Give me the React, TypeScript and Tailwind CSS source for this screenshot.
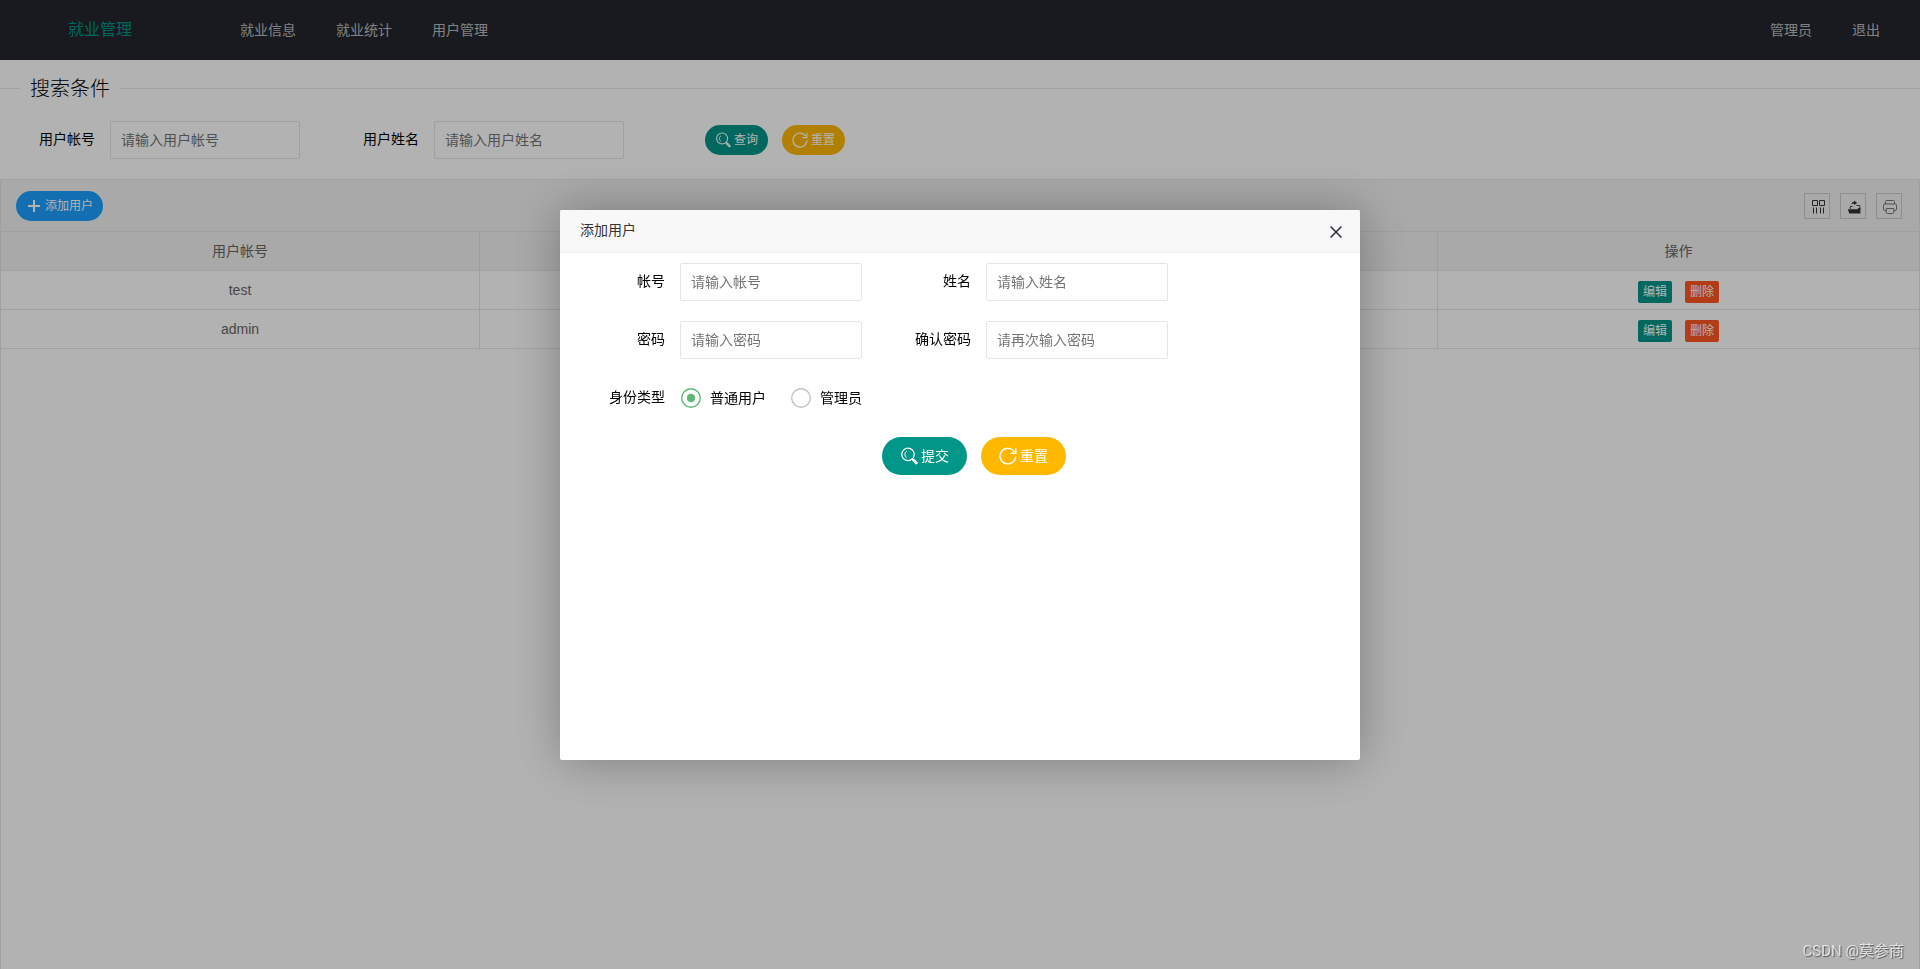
import React, { useState } from 'react';
import clsx from 'clsx';

const navItems = ['就业信息', '就业统计', '用户管理'];

const users = [
  { account: 'test', name: '测试', role: '普通用户' },
  { account: 'admin', name: '管理员', role: '管理员' },
];

function SearchIcon({ className }: { className?: string }) {
  return (
    <svg viewBox="0 0 18 18" fill="none" stroke="currentColor" className={className}>
      <circle cx="8" cy="7.4" r="6.2" strokeWidth="1.2" />
      <path d="M6.8 4.2a3.6 3.6 0 0 0 0 6.4" strokeWidth="1" />
      <path d="M12.3 11.9l1.2 1.2" strokeWidth="1.2" />
      <path d="M13.6 13.2l2.7 2.7" strokeWidth="2.8" strokeLinecap="round" />
      <path d="M14 13.6l2 2" strokeWidth=".6" className="stroke-black/30" />
    </svg>
  );
}

function RefreshIcon({ className }: { className?: string }) {
  return (
    <svg viewBox="0 0 18 18" fill="none" stroke="currentColor" strokeWidth="1.4" className={className}>
      <path d="M16.7 9.5A7.8 7.8 0 1 1 15.4 4.8" />
      <path d="M16.8 1.2v5h-5" />
    </svg>
  );
}

function PlusIcon() {
  return (
    <svg viewBox="0 0 12 12" stroke="currentColor" strokeWidth="2" className="size-3">
      <path d="M6 0v12M0 6h12" />
    </svg>
  );
}

function ColumnsIcon() {
  return (
    <svg viewBox="0 0 14 14" fill="none" stroke="currentColor" className="size-3.5">
      <path d="M1.5.5h5v5h-5zM8.5.5h5v5h-5z" />
      <path d="M2.5 7.5v6M5.5 7.5v6M9.5 7.5v6M12.5 7.5v6" />
    </svg>
  );
}

function ExportIcon() {
  return (
    <svg viewBox="0 0 14 14" fill="currentColor" className="size-3.5">
      <path d="M.8 9.2h9.7l1-1.2h1.9v5.4H2.3z" />
      <path d="M3.2 9V6.5h2.4M9.4 5.5h3.4v4" fill="none" stroke="currentColor" strokeWidth=".9" />
      <path d="M4.4 4.8C4.6 2.8 5.8 1.9 7 1.8V.5l3.2 2.4L7 5V3.6c-1 0-1.8.4-2.6 1.2z" />
    </svg>
  );
}

function PrintIcon() {
  return (
    <svg viewBox="0 0 14 14" fill="none" stroke="currentColor" className="size-3.5">
      <path d="M2.5 4V1.6A1.1 1.1 0 0 1 3.6.5h6.8a1.1 1.1 0 0 1 1.1 1.1V4" />
      <path d="M3 10.5H1.8A1.3 1.3 0 0 1 .5 9.2V5.3A1.3 1.3 0 0 1 1.8 4h10.4a1.3 1.3 0 0 1 1.3 1.3v3.9a1.3 1.3 0 0 1-1.3 1.3H11" />
      <path d="M3.2 8.5h7.6v3.7a1.3 1.3 0 0 1-1.3 1.3h-5a1.3 1.3 0 0 1-1.3-1.3z" />
    </svg>
  );
}

function Field({ label, placeholder, type = 'text', labelClass, inputClass }: {
  label: string;
  placeholder: string;
  type?: string;
  labelClass: string;
  inputClass: string;
}) {
  return (
    <div className="flex items-center">
      <label className={clsx('pr-[15px] pb-0.5 text-right text-sm leading-5', labelClass)}>{label}</label>
      <input
        type={type}
        placeholder={placeholder}
        className={clsx('h-[38px] rounded-xs border border-[#e6e6e6] bg-white pb-px pl-2.5 text-sm outline-none placeholder:text-[#757575]', inputClass)}
      />
    </div>
  );
}

function Radio({ label, checked, onChange }: { label: string; checked: boolean; onChange: () => void }) {
  return (
    <button type="button" onClick={onChange} className="flex items-center text-sm">
      <svg viewBox="0 0 20 20" fill="none" className={clsx('mr-[9px] size-5', checked ? 'text-[#5FB878]' : 'text-[#c2c2c2]')}>
        <circle cx="10" cy="10" r="9.3" stroke="currentColor" strokeWidth="1.4" />
        {checked && <circle cx="10" cy="10" r="4.2" fill="currentColor" />}
      </svg>
      {label}
    </button>
  );
}

export default function App() {
  const [open, setOpen] = useState(true);
  const [role, setRole] = useState('普通用户');

  return (
    <div className="flex h-screen flex-col overflow-hidden bg-white font-['Liberation_Sans','Noto_Sans_CJK_SC',sans-serif] text-sm text-black">
      {/* top nav */}
      <header className="flex h-[60px] shrink-0 items-center bg-[#23262E] pr-5 text-white/70">
        <div className="w-[200px] text-center text-base text-[#009688]">就业管理</div>
        <nav className="ml-5 flex">
          {navItems.map((item) => (
            <a key={item} href="#" className="px-5">{item}</a>
          ))}
        </nav>
        <div className="ml-auto flex">
          <a href="#" className="px-5">管理员</a>
          <a href="#" className="px-5">退出</a>
        </div>
      </header>

      {/* search form */}
      <section className="h-[119px] shrink-0">
        <div className="flex h-14 items-center">
          <span className="h-px w-5 bg-[#e6e6e6]" />
          <h2 className="px-2.5 pt-px text-xl font-light">搜索条件</h2>
          <span className="h-px flex-1 bg-[#e6e6e6]" />
        </div>
        <form className="mt-[5px] flex items-center">
          <Field label="用户帐号" placeholder="请输入用户帐号" labelClass="w-[110px]" inputClass="w-[190px]" />
          <Field label="用户姓名" placeholder="请输入用户姓名" labelClass="w-[134px]" inputClass="w-[190px]" />
          <button type="button" className="ml-[81px] flex h-[30px] w-[63px] items-center justify-center gap-[3px] rounded-full bg-[#009688] text-xs text-white">
            <SearchIcon className="size-4" />查询
          </button>
          <button type="reset" className="ml-3.5 flex h-[30px] w-[63px] items-center justify-center gap-[3px] rounded-full bg-[#FFB800] text-xs text-white">
            <RefreshIcon className="size-4" />重置
          </button>
        </form>
      </section>

      {/* user table */}
      <section className="flex-1 border-x border-t border-[#e6e6e6]">
        <div className="flex h-[52px] items-center justify-between border-b border-[#e6e6e6] bg-[#f2f2f2] pr-[17px] pl-[15px]">
          <button onClick={() => setOpen(true)} className="flex h-[30px] w-[87px] items-center justify-center gap-[5px] rounded-full bg-[#1E9FFF] pl-0.5 text-xs text-white">
            <PlusIcon />添加用户
          </button>
          <div className="flex gap-2.5 text-[#333]">
            <span className="flex size-[26px] items-center justify-center border border-[#ccc] pt-0.5 pl-0.5"><ColumnsIcon /></span>
            <span className="flex size-[26px] items-center justify-center border border-[#ccc] pt-0.5 pl-0.5"><ExportIcon /></span>
            <span className="flex size-[26px] items-center justify-center border border-[#ccc] pt-0.5 pl-0.5 text-[#777]"><PrintIcon /></span>
          </div>
        </div>
        <table className="w-full table-fixed border-separate border-spacing-0 text-center text-[#666]">
          <colgroup>
            <col className="w-[479px]" />
            <col className="w-[479px]" />
            <col className="w-[479px]" />
            <col />
          </colgroup>
          <thead>
            <tr className="h-[39px] bg-[#f2f2f2]">
              {['用户帐号', '用户姓名', '身份类型', '操作'].map((title, i) => (
                <th key={title} className={clsx('border-b border-[#e6e6e6] p-0 pb-px font-normal', i < 3 && 'border-r')}>{title}</th>
              ))}
            </tr>
          </thead>
          <tbody>
            {users.map((user) => (
              <tr key={user.account} className="h-[39px]">
                <td className="border-r border-b border-[#e6e6e6] p-0">{user.account}</td>
                <td className="border-r border-b border-[#e6e6e6] p-0">{user.name}</td>
                <td className="border-r border-b border-[#e6e6e6] p-0">{user.role}</td>
                <td className="border-b border-[#e6e6e6] p-0">
                  <div className="flex justify-center gap-[13px] pt-[3px] text-xs text-white">
                    <button className="h-[22px] w-[34px] rounded-xs bg-[#009688]">编辑</button>
                    <button className="h-[22px] w-[34px] rounded-xs bg-[#FF5722]">删除</button>
                  </div>
                </td>
              </tr>
            ))}
          </tbody>
        </table>
      </section>

      {/* add user dialog */}
      {open && (
        <div className="fixed inset-0 flex items-start justify-center bg-black/30 pt-[210px]">
          <div className="h-[550px] w-[800px] rounded-xs bg-white shadow-[1px_1px_50px_rgba(0,0,0,0.3)]">
            <div className="flex h-[43px] items-center justify-between rounded-t-xs border-b border-[#eee] bg-[#F8F8F8] pr-[18px] pl-5 text-[#333]">
              <span className="pb-0.5">添加用户</span>
              <button onClick={() => setOpen(false)} className="pt-0.5 text-[#2E2D3C]">
                <svg viewBox="0 0 12 12" stroke="currentColor" strokeWidth="1.5" className="size-3">
                  <path d="M.5.5l11 11M11.5.5l-11 11" />
                </svg>
              </button>
            </div>
            <form className="pt-2.5">
              <div className="flex">
                <Field label="帐号" placeholder="请输入帐号" labelClass="w-[120px]" inputClass="w-[182px]" />
                <Field label="姓名" placeholder="请输入姓名" labelClass="w-[124px]" inputClass="w-[182px]" />
              </div>
              <div className="mt-5 flex">
                <Field label="密码" placeholder="请输入密码" type="password" labelClass="w-[120px]" inputClass="w-[182px]" />
                <Field label="确认密码" placeholder="请再次输入密码" type="password" labelClass="w-[124px]" inputClass="w-[182px]" />
              </div>
              <div className="mt-5 flex h-[38px] items-center">
                <span className="w-[120px] pr-[15px] pb-0.5 text-right">身份类型</span>
                <div className="flex gap-[25px] pl-px">
                  {['普通用户', '管理员'].map((item) => (
                    <Radio key={item} label={item} checked={role === item} onChange={() => setRole(item)} />
                  ))}
                </div>
              </div>
              <div className="mt-5 flex gap-3.5 pl-[322px] text-white">
                <button type="button" className="flex h-[38px] w-[85px] items-center justify-center gap-[3px] rounded-full bg-[#009688] pb-px">
                  <SearchIcon className="size-[18px]" />提交
                </button>
                <button type="reset" className="flex h-[38px] w-[85px] items-center justify-center gap-[3px] rounded-full bg-[#FFB800] pb-px">
                  <RefreshIcon className="size-[18px]" />重置
                </button>
              </div>
            </form>
          </div>
        </div>
      )}

      <div className="fixed right-4 bottom-[7px] font-['Roboto','Noto_Sans_CJK_SC',sans-serif] text-[15px] text-white/70 [text-shadow:1px_1px_1px_rgba(0,0,0,0.5)]">CSDN @莫参商</div>
    </div>
  );
}
